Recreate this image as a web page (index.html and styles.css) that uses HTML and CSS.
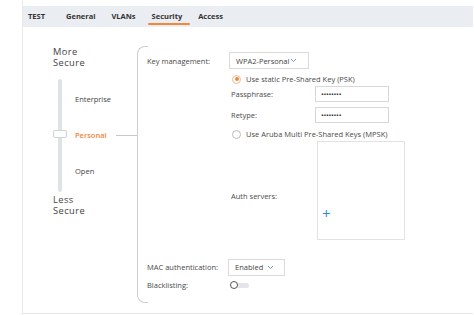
FILE: index.html
```html
<!DOCTYPE html>
<html>
<head>
<meta charset="utf-8">
<link rel="stylesheet" href="styles.css">
</head>
<body>
<div class="panel">
  <nav class="tabs">
    <span class="tab tab-first">TEST</span>
    <span class="tab">General</span>
    <span class="tab">VLANs</span>
    <span class="tab active">Security</span>
    <span class="tab">Access</span>
  </nav>
  <div class="content">
    <div class="scale">
      <div class="scale-title"><span class="tline">More</span><span class="tline">Secure</span></div>
      <div class="scale-body">
        <div class="track"><span class="handle"></span></div>
        <div class="levels">
          <div class="level">Enterprise</div>
          <div class="level current"><span>Personal</span><span class="connector"></span></div>
          <div class="level">Open</div>
        </div>
      </div>
      <div class="scale-title"><span class="tline">Less</span><span class="tline">Secure</span></div>
    </div>
    <div class="form">
      <div class="row row-key">
        <label class="lbl">Key management:</label>
        <div class="select select-wpa"><span>WPA2-Personal</span>
          <svg class="chev" width="7" height="5" viewBox="0 0 7 5"><path d="M1 1l2.5 2.5L6 1" fill="none" stroke="#6d9dc5" stroke-width="1"/></svg>
        </div>
      </div>
      <div class="sub">
        <div class="radio-row row-psk"><span class="radio checked"></span>Use static Pre-Shared Key (PSK)</div>
        <div class="subrow row-pass"><label class="sublbl">Passphrase:</label><div class="input">••••••••</div></div>
        <div class="subrow row-retype"><label class="sublbl">Retype:</label><div class="input">••••••••</div></div>
        <div class="radio-row row-mpsk"><span class="radio"></span>Use Aruba Multi Pre-Shared Keys (MPSK)</div>
        <div class="subrow row-auth"><label class="sublbl auth-lbl">Auth servers:</label>
          <div class="authbox"><span class="plus">+</span></div>
        </div>
      </div>
      <div class="row row-mac">
        <label class="lbl">MAC authentication:</label>
        <div class="select select-mac"><span>Enabled</span>
          <svg class="chev" width="7" height="5" viewBox="0 0 7 5"><path d="M1 1l2.5 2.5L6 1" fill="none" stroke="#6d9dc5" stroke-width="1"/></svg>
        </div>
      </div>
      <div class="row row-black">
        <label class="lbl">Blacklisting:</label>
        <span class="toggle"><span class="knob"></span></span>
      </div>
    </div>
  </div>
</div>
</body>
</html>
```

FILE: styles.css
```css
* { box-sizing: border-box; }
html, body { margin: 0; padding: 0; background: #fff; }
body {
  font-family: "Open Sans", "Liberation Sans", sans-serif;
  font-size: 7.5px;
  color: #4a4a4a;
}
.panel {
  margin-left: 22px;
  width: 451px;
  height: 314px;
  border-left: 1px solid #e8e8e8;
  border-bottom: 1px solid #e8e8e8;
  padding-top: 6px;
}
.tabs {
  height: 21px;
  background: #eaedf1;
  display: flex;
  align-items: center;
  font-weight: 700;
  color: #333;
  font-size: 7.5px;
}
.tab {
  position: relative;
  padding: 0 8px;
  height: 21px;
  line-height: 21px;
}
.tab-first { padding-left: 5px; padding-right: 13px; }
.tab.active::after {
  content: "";
  position: absolute;
  left: 4px;
  right: 0;
  bottom: 2px;
  height: 2px;
  background: #f0883a;
  border-radius: 1px;
}
.content {
  display: flex;
  padding-top: 19px;
}
.scale {
  width: 114px;
  padding-left: 30px;
}
.scale-title {
  display: flex;
  flex-direction: column;
  font-size: 9.3px;
  letter-spacing: 0.45px;
  color: #444;
}
.tline { display: block; height: 11px; line-height: 11px; }
.scale-body {
  display: flex;
  margin-top: 11px;
  margin-bottom: 2px;
  height: 113px;
}
.track {
  position: relative;
  width: 4px;
  margin-left: 5px;
  background: #dfe2e6;
  border-radius: 2px;
  height: 113px;
}
.handle {
  position: absolute;
  left: -5px;
  top: 51px;
  width: 14px;
  height: 8px;
  background: #fff;
  border: 1px solid #cfd3d8;
  border-radius: 2px;
}
.levels {
  flex: 1;
  margin-left: 13px;
  display: flex;
  flex-direction: column;
  justify-content: space-between;
  padding: 15px 0 16px;
}
.level { height: 10px; line-height: 10px; color: #444; }
.level.current {
  display: flex;
  align-items: center;
  color: #f0883a;
  font-weight: 600;
  gap: 9px;
  margin-right: -1px;
}
.connector { flex: 1; height: 1px; background: #c8c8c8; }
.form {
  position: relative;
  flex: 1;
  height: 257px;
  padding: 6px 0 0 10px;
}
.form::before {
  content: "";
  position: absolute;
  left: 0; top: 0; bottom: 0;
  width: 10px;
  border: 1px solid #cfcfcf;
  border-right: none;
  border-radius: 8px 0 0 8px;
}
.row { display: flex; align-items: center; }
.lbl { width: 82px; white-space: nowrap; }
.select {
  height: 17px;
  border: 1px solid #dadada;
  display: flex;
  align-items: center;
  justify-content: space-between;
  padding: 0 11px 0 6px;
  color: #444;
  white-space: nowrap;
  flex: none;
}
.chev { flex: none; }
.select-wpa { width: 80px; }
.select-mac { width: 57px; margin-left: -1px; padding-right: 10px; }
.row-key { height: 17px; }
.sub { padding-left: 84px; }
.radio-row { display: flex; align-items: center; height: 10px; gap: 5px; white-space: nowrap; }
.row-psk { margin-top: 5px; }
.row-mpsk { margin-top: 6px; }
.radio {
  width: 9px; height: 9px;
  border: 1px solid #bdbdbd;
  border-radius: 50%;
  margin-left: 1px;
  position: relative;
  flex: none;
}
.radio.checked { border-color: #f3b98d; }
.radio.checked::after {
  content: "";
  position: absolute;
  left: 1.5px; top: 1.5px;
  width: 4px; height: 4px;
  background: #f0883a;
  border-radius: 50%;
}
.subrow { display: flex; align-items: center; }
.sublbl { width: 84px; flex: none; }
.auth-lbl { margin-top: 10px; }
.input {
  width: 74px;
  height: 16px;
  border: 1px solid #d8d8d8;
  display: flex;
  align-items: center;
  padding-left: 5px;
  font-size: 7.5px;
  letter-spacing: -0.3px;
  color: #333;
}
.row-pass { margin-top: 2px; }
.row-retype { margin-top: 5px; }
.row-auth { margin-top: 2px; }
.authbox {
  position: relative;
  width: 88px;
  height: 99px;
  margin-left: 2px;
  border: 1px solid #e3e3e3;
  padding: 64px 0 0 4px;
}
.plus { color: #2a8fd0; font-size: 15px; line-height: 15px; font-weight: 400; }
.row-mac { margin-top: 19px; height: 16px; }
.row-black { margin-top: 5px; height: 10px; }
.toggle {
  position: relative;
  width: 19px; height: 5px;
  background: #e3e5e8;
  border-radius: 3px;
  margin-left: 1px;
}
.knob {
  position: absolute;
  left: 0; top: -2px;
  width: 8px; height: 8px;
  border: 1px solid #555;
  border-radius: 50%;
  background: #fff;
}
```
